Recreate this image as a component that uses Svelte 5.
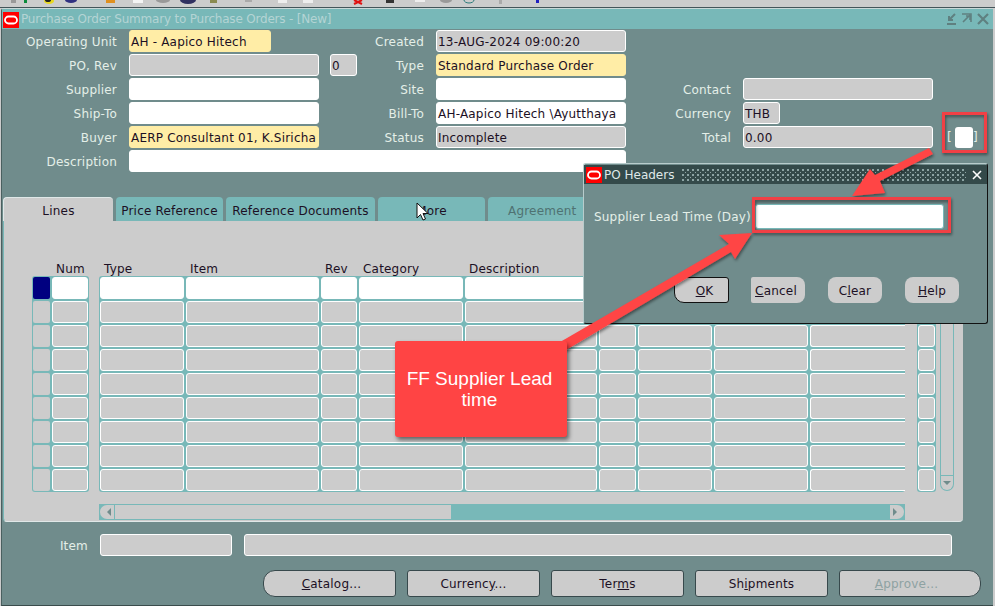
<script>
    const sizes = [84, 133, 36, 104, 132, 37, 74, 94, 95];
    const rows = [0, 1, 2, 3, 4, 5, 6, 7, 8];
    const heads = [
        ['Type', 84], ['Item', 133], ['Rev', 36], ['Category', 104], ['Description', 132]
    ];
</script>

{#snippet logo()}
    <svg class="logo" viewBox="0 0 16 16" width="16" height="16" aria-hidden="true">
        <rect width="16" height="16" fill="#f00" />
        <rect x="2" y="4.5" width="12" height="7" rx="3.5" fill="none" stroke="#fff" stroke-width="1.8" />
    </svg>
{/snippet}

<div class="page">
    <div class="toolbar">
        <svg width="560" height="7" viewBox="0 0 560 7" aria-hidden="true">
            <rect x="11" y="0" width="5" height="3" fill="#999" />
            <rect x="24" y="0" width="3" height="3" fill="#0a8a3a" />
            <ellipse cx="49" cy="1" rx="5" ry="3" fill="#e8d820" />
            <ellipse cx="48" cy="0" rx="3" ry="2" fill="#222" />
            <ellipse cx="71" cy="0" rx="6" ry="3" fill="#303080" />
            <rect x="106" y="0" width="9" height="3" fill="#e09020" />
            <rect x="133" y="0" width="10" height="3" fill="#f4f4f4" />
            <ellipse cx="163" cy="0" rx="7" ry="3" fill="#999" />
            <ellipse cx="188" cy="0" rx="8" ry="4" fill="#303060" />
            <rect x="210" y="0" width="7" height="3" fill="#8a8a50" />
            <rect x="245" y="0" width="7" height="2" fill="#aaa" />
            <rect x="278" y="0" width="9" height="3" fill="#eee" />
            <rect x="303" y="0" width="10" height="3" fill="#eee" />
            <path d="M354 0 L362 4 M362 0 L354 4" stroke="#e01010" stroke-width="2" />
            <rect x="386" y="0" width="8" height="3" fill="#333" />
            <rect x="415" y="0" width="10" height="2" fill="#eee" />
            <ellipse cx="446" cy="0" rx="6" ry="3" fill="#999" />
            <ellipse cx="469" cy="0" rx="5" ry="3" fill="none" stroke="#2a7a7a" />
            <rect x="499" y="0" width="3" height="4" fill="#aaa" />
            <rect x="536" y="0" width="3" height="3" fill="#2020c0" />
        </svg>
    </div>

    <div class="window">
        <div class="titlebar">
            {@render logo()}
            <span class="title">Purchase Order Summary to Purchase Orders - [New]</span>
            <svg class="winbtns" width="44" height="12" viewBox="0 0 44 12" aria-hidden="true">
                <g fill="none" stroke="#5f8080" stroke-width="2">
                    <path d="M1 11 H10 M9 1 L4 6 M3 3 V7 H7" />
                    <path d="M16 1 H25 V9 M24 2 L17 9 M20 3 H24 M24 3 V7" stroke-width="1.6" />
                    <path d="M32 1 L42 11 M42 1 L32 11" stroke-width="2.2" />
                </g>
            </svg>
        </div>

        <div class="form">
            <div class="lbl">Operating Unit</div>
            <div class="fld req short">AH - Aapico Hitech</div>
            <div class="lbl c5">Created</div>
            <div class="fld ro c6">13-AUG-2024 09:00:20</div>

            <div class="lbl">PO, Rev</div>
            <div class="fld ro"></div>
            <div class="fld ro c4">0</div>
            <div class="lbl c5">Type</div>
            <div class="fld req c6">Standard Purchase Order</div>

            <div class="lbl">Supplier</div>
            <div class="fld"></div>
            <div class="lbl c5">Site</div>
            <div class="fld c6"></div>
            <div class="lbl c7">Contact</div>
            <div class="fld ro c8"></div>

            <div class="lbl">Ship-To</div>
            <div class="fld"></div>
            <div class="lbl c5">Bill-To</div>
            <div class="fld c6">AH-Aapico Hitech \Ayutthaya</div>
            <div class="lbl c7">Currency</div>
            <div class="fld ro cur c8">THB</div>

            <div class="lbl">Buyer</div>
            <div class="fld req">AERP Consultant 01, K.Siricha</div>
            <div class="lbl c5">Status</div>
            <div class="fld ro c6">Incomplete</div>
            <div class="lbl c7">Total</div>
            <div class="fld ro c8">0.00</div>
            <div class="flex-field"><span>[</span><i></i><span>]</span></div>

            <div class="lbl">Description</div>
            <div class="fld desc"></div>
        </div>

        <div class="tabs">
            <div class="tab active" style="width:110px">Lines</div>
            <div class="tab" style="width:107px">Price Reference</div>
            <div class="tab" style="width:149px">Reference Documents</div>
            <div class="tab" style="width:107px">More</div>
            <div class="tab off" style="width:130px">Agreement</div>
        </div>

        <div class="panel">
            <div class="heads">
                <span class="num-head">Num</span>
                {#each heads as [name, w]}
                    <span style="width:{w + 2}px">{name}</span>
                {/each}
            </div>
            <div class="blocks">
                <div class="grp">
                    {#each rows as r}
                        <div class="row">
                            <div class="sel" class:cur-sel={r === 0}></div>
                            <div class="cell" class:on={r === 0} style="width:36px"></div>
                        </div>
                    {/each}
                </div>
                <div class="grp mid">
                    {#each rows as r}
                        <div class="row">
                            {#each sizes as w, i}
                                <div class="cell" class:on={r === 0} class:last={i === 8} style="width:{w}px"></div>
                            {/each}
                        </div>
                    {/each}
                </div>
                <div class="grp dfs">
                    {#each rows as r}
                        <div class="row"><div class="cell" style="width:17px"></div></div>
                    {/each}
                </div>
                <div class="vscroll"><div class="vdown"></div></div>
            </div>
            <div class="hscroll">
                <div class="harrow left"></div>
                <div class="thumb"></div>
                <div class="track"></div>
                <div class="harrow right"></div>
            </div>
        </div>

        <div class="bottom">
            <div class="lbl item-lbl">Item</div>
            <div class="fld ro item1"></div>
            <div class="fld ro item2"></div>
        </div>

        <div class="actions">
            <div class="btn first"><u>C</u>atalog...</div>
            <div class="btn">Currenc<u>y</u>...</div>
            <div class="btn">Ter<u>m</u>s</div>
            <div class="btn">Sh<u>i</u>pments</div>
            <div class="btn end off"><u>A</u>pprove...</div>
        </div>
    </div>

    <!-- mouse pointer -->
    <svg class="cursor" width="14" height="20" viewBox="0 0 14 20" aria-hidden="true">
        <path d="M1 1 V16 L4.5 12.5 L7 18 L9.5 17 L7 11.5 H12 Z" fill="#fff" stroke="#111" stroke-width="1" />
    </svg>

    <div class="dialog">
        <div class="dlg-title">
            {@render logo()}
            <span>PO Headers</span>
            <div class="stipple"></div>
            <svg width="10" height="10" viewBox="0 0 10 10" aria-hidden="true">
                <path d="M1 1 L9 9 M9 1 L1 9" stroke="#fff" stroke-width="1.6" />
            </svg>
        </div>
        <div class="dlg-row">
            <span class="dlg-lbl">Supplier Lead Time (Day)</span>
            <div class="dlg-input"></div>
        </div>
        <div class="dlg-btns">
            <div class="dbtn ok"><u>O</u>K</div>
            <div class="dbtn cancel"><u>C</u>ancel</div>
            <div class="dbtn round">C<u>l</u>ear</div>
            <div class="dbtn round"><u>H</u>elp</div>
        </div>
    </div>

    <!-- annotations -->
    <svg class="marks" width="995" height="606" viewBox="0 0 995 606" aria-hidden="true">
        <defs>
            <filter id="sh" x="-10%" y="-10%" width="120%" height="120%">
                <feDropShadow dx="1" dy="2" stdDeviation="1.5" flood-color="#000" flood-opacity="0.45" />
            </filter>
        </defs>
        <g filter="url(#sh)">
            <rect x="943.5" y="113.5" width="42" height="38" fill="none" stroke="#f04045" stroke-width="3" />
            <rect x="753.5" y="198.5" width="196" height="33" fill="none" stroke="#f04045" stroke-width="3" />
            <path d="M929 148 L933 154 L880 181 L885 193 L852 196 L870 169 L875 175 Z" fill="#ff4444" />
            <path d="M555 345 L729 244 L719 235 L752 233 L735 259 L731 252 L566 350 Z" fill="#ff4444" />
        </g>
    </svg>

    <div class="callout">FF Supplier Lead<br />time</div>
</div>

<style>
:global(body) {
    margin: 0;
    background: #cccccc;
}

.page {
    position: relative;
    width: 995px;
    height: 606px;
    overflow: hidden;
    font-family: "DejaVu Sans", sans-serif;
    font-size: 12px;
    letter-spacing: 0.2px;
    color: #1c1024;
}

.toolbar {
    height: 7px;
    background: #cccccc;
    border-bottom: 1px solid #45555a;
    line-height: 0;
}

.window {
    box-sizing: border-box;
    width: 992px;
    height: 598px;
    margin-left: 1px;
    background: #708c8c;
    border-top: 1px solid #c8d8d8;
    border-left: 1px solid #4a6060;
    border-bottom: 1px solid #3a4c4c;
    border-radius: 3px 3px 0 0;
}

.titlebar {
    display: flex;
    align-items: center;
    height: 20px;
    background: #78b8b8;
    color: #b4d4d4;
}

.logo {
    flex: none;
}

.titlebar .logo {
    margin: 2px 2px 0 1px;
}

.title {
    flex: 1;
    letter-spacing: -0.2px;
}

.winbtns {
    margin-right: 3px;
}

.form {
    display: grid;
    grid-template-columns: 127px 190px 11px 27px 79px 190px 117px 190px 12px 36px;
    grid-auto-rows: 22px;
    row-gap: 2px;
    margin-top: 1px;
}

.lbl {
    grid-column: 1;
    padding-right: 12px;
    text-align: right;
    line-height: 25px;
    color: #e4efe8;
}

.c4 {
    grid-column: 4;
}

.c5 {
    grid-column: 5;
}

.c6 {
    grid-column: 6;
}

.c7 {
    grid-column: 7;
}

.c8 {
    grid-column: 8;
}

.fld {
    box-sizing: border-box;
    background: #fff;
    border: 1px solid #fff;
    border-radius: 3px;
    padding-left: 1px;
    line-height: 22px;
    white-space: nowrap;
    overflow: hidden;
}

.ro {
    background: #cccccc;
}

.req {
    background: #ffeda6;
    border-color: #ffeda6;
}

.short {
    width: 142px;
}

.cur {
    width: 37px;
}

.desc {
    grid-column: 2 / span 5;
}

.flex-field {
    grid-column: 10;
    display: flex;
    align-items: center;
    justify-content: space-between;
    color: #e4efe8;
    padding: 0 3px 0 2px;
}

.flex-field i {
    width: 18px;
    height: 21px;
    margin-left: 2px;
    background: #fff;
    border-radius: 3px;
}

.tabs {
    display: flex;
    gap: 3px;
    height: 24px;
    margin: 25px 0 0 1px;
}

.tab {
    box-sizing: border-box;
    background: #78b8b8;
    border-radius: 4px 4px 0 0;
    text-align: center;
    line-height: 28px;
    white-space: nowrap;
}

.tab.active {
    background: #cccccc;
    border-top: 1px solid #dfe8e8;
    border-left: 1px solid #dfe8e8;
    line-height: 26px;
}

.tab.off {
    color: #4f7272;
    text-align: left;
    padding-left: 20px;
}

.panel {
    box-sizing: border-box;
    width: 960px;
    height: 301px;
    margin-left: 1px;
    background: #cccccc;
    border-left: 1px solid #78b8b8;
    border-bottom: 1px solid #e0e8e8;
    border-radius: 0 0 4px 4px;
}

.heads {
    display: flex;
    height: 15px;
    padding: 40px 0 0 49px;
    line-height: 16px;
}

.heads span {
    box-sizing: border-box;
    padding-left: 3px;
    flex: none;
    white-space: nowrap;
}

.heads .num-head {
    width: 48px;
    padding-left: 3px;
}

.blocks {
    display: flex;
    margin-left: 28px;
}

.grp {
    display: flex;
    flex-direction: column;
    gap: 2px;
    padding: 1px;
    background: #78b8b8;
    border-radius: 3px;
}

.mid {
    margin-left: 10px;
    padding-right: 0;
}

.dfs {
    margin-left: 12px;
}

.row {
    display: flex;
    gap: 2px;
    height: 22px;
}

.sel {
    width: 17px;
    background: #cccccc;
    border-radius: 2px;
}

.cur-sel {
    background: #000080;
}

.cell {
    box-sizing: border-box;
    height: 22px;
    background: #cccccc;
    border: 1px solid #fff;
    border-radius: 3px;
}

.cell.on {
    background: #fff;
}

.cell.last {
    border-right: 0;
    border-radius: 3px 0 0 3px;
}

.vscroll {
    box-sizing: border-box;
    position: relative;
    width: 14px;
    height: 215px;
    margin: 0 0 0 4px;
    background: #cccccc;
    border: 1px solid #78b8b8;
    border-top: 0;
    border-radius: 0 0 7px 7px;
}

.vdown {
    position: absolute;
    left: 0;
    right: 0;
    bottom: 0;
    height: 14px;
    border-top: 1px solid #78b8b8;
}

.vdown::after {
    content: "";
    position: absolute;
    left: 2px;
    top: 5px;
    border: 4px solid transparent;
    border-top: 4px solid #708c8c;
}

.hscroll {
    display: flex;
    box-sizing: border-box;
    width: 806px;
    height: 16px;
    margin: 12px 0 0 95px;
    border: 1px solid #78b8b8;
    background: #78b8b8;
}

.harrow {
    position: relative;
    width: 14px;
    background: #cccccc;
}

.harrow.left {
    border-radius: 7px 0 0 7px;
    border-right: 1px solid #78b8b8;
}

.harrow.right {
    border-radius: 0 7px 7px 0;
}

.harrow::after {
    content: "";
    position: absolute;
    top: 3px;
    border: 4px solid transparent;
}

.harrow.left::after {
    right: 3px;
    border-right: 4px solid #708c8c;
}

.harrow.right::after {
    left: 3px;
    border-left: 4px solid #708c8c;
}

.thumb {
    width: 336px;
    background: #cccccc;
}

.track {
    flex: 1;
}

.bottom {
    display: flex;
    height: 22px;
    margin-top: 12px;
}

.item-lbl {
    width: 98px;
    box-sizing: border-box;
}

.item1 {
    width: 132px;
}

.item2 {
    width: 708px;
    margin-left: 12px;
}

.actions {
    display: flex;
    gap: 11px;
    margin: 14px 0 0 261px;
}

.btn {
    box-sizing: border-box;
    width: 133px;
    height: 27px;
    background: #cccccc;
    border: 1px solid #37494c;
    border-radius: 3px;
    text-align: center;
    line-height: 26px;
}

.btn.first {
    padding-left: 4px;
    border-radius: 12px 3px 3px 12px;
}

.btn.end {
    width: 142px;
    padding-right: 7px;
    border-radius: 3px 12px 12px 3px;
}

.btn.off {
    color: #8ea2a2;
}

.cursor {
    position: absolute;
    left: 416px;
    top: 202px;
}

.dialog {
    position: absolute;
    box-sizing: border-box;
    left: 583px;
    top: 163px;
    width: 405px;
    height: 161px;
    background: #708c8c;
    border: 1px solid #b8cccc;
    border-right: 1px solid #111;
    border-bottom: 1px solid #111;
    border-radius: 3px;
}

.dlg-title {
    display: flex;
    align-items: center;
    height: 19px;
    margin-top: 1px;
    padding: 0 5px 0 2px;
    background: #344a4a;
    color: #dfe8e8;
    letter-spacing: 0;
}

.dlg-title span {
    margin-left: 2px;
}

.stipple {
    flex: 1;
    height: 12px;
    margin: 0 6px 0 8px;
    background-image:
        radial-gradient(circle at 1px 1px, #8fa6a6 0.7px, transparent 1px),
        radial-gradient(circle at 3.5px 3.5px, #8fa6a6 0.7px, transparent 1px);
    background-size: 5px 5px;
}

.dlg-row {
    display: flex;
    align-items: center;
    height: 25px;
    margin-top: 20px;
    padding-left: 10px;
}

.dlg-lbl {
    width: 161px;
    flex: none;
    color: #e4efe8;
    white-space: nowrap;
}

.dlg-input {
    box-sizing: border-box;
    width: 189px;
    height: 25px;
    background: #fff;
    border: 1px solid #78b8b8;
    border-radius: 3px;
}

.dlg-btns {
    display: flex;
    gap: 23px;
    margin: 48px 0 0 90px;
}

.dbtn {
    box-sizing: border-box;
    width: 54px;
    height: 26px;
    background: #cccccc;
    border-radius: 8px;
    text-align: center;
    line-height: 28px;
}

.dbtn.ok {
    width: 55px;
    padding-left: 6px;
    border: 1px solid #111;
    border-radius: 3px 3px 3px 10px;
    line-height: 26px;
}

.dbtn.cancel {
    margin-left: -1px;
    padding-right: 4px;
    border-radius: 2px 8px 8px 2px;
}

.marks {
    position: absolute;
    left: 0;
    top: 0;
    pointer-events: none;
}

.callout {
    position: absolute;
    box-sizing: border-box;
    left: 395px;
    top: 341px;
    width: 172px;
    height: 96px;
    padding: 27px 3px 0 0;
    background: #ff4444;
    border-radius: 3px;
    box-shadow: 2px 3px 4px rgba(0, 0, 0, 0.5);
    color: #fff;
    font-family: "Liberation Sans", Arial, sans-serif;
    font-size: 19px;
    letter-spacing: 0;
    line-height: 21px;
    text-align: center;
}
</style>
